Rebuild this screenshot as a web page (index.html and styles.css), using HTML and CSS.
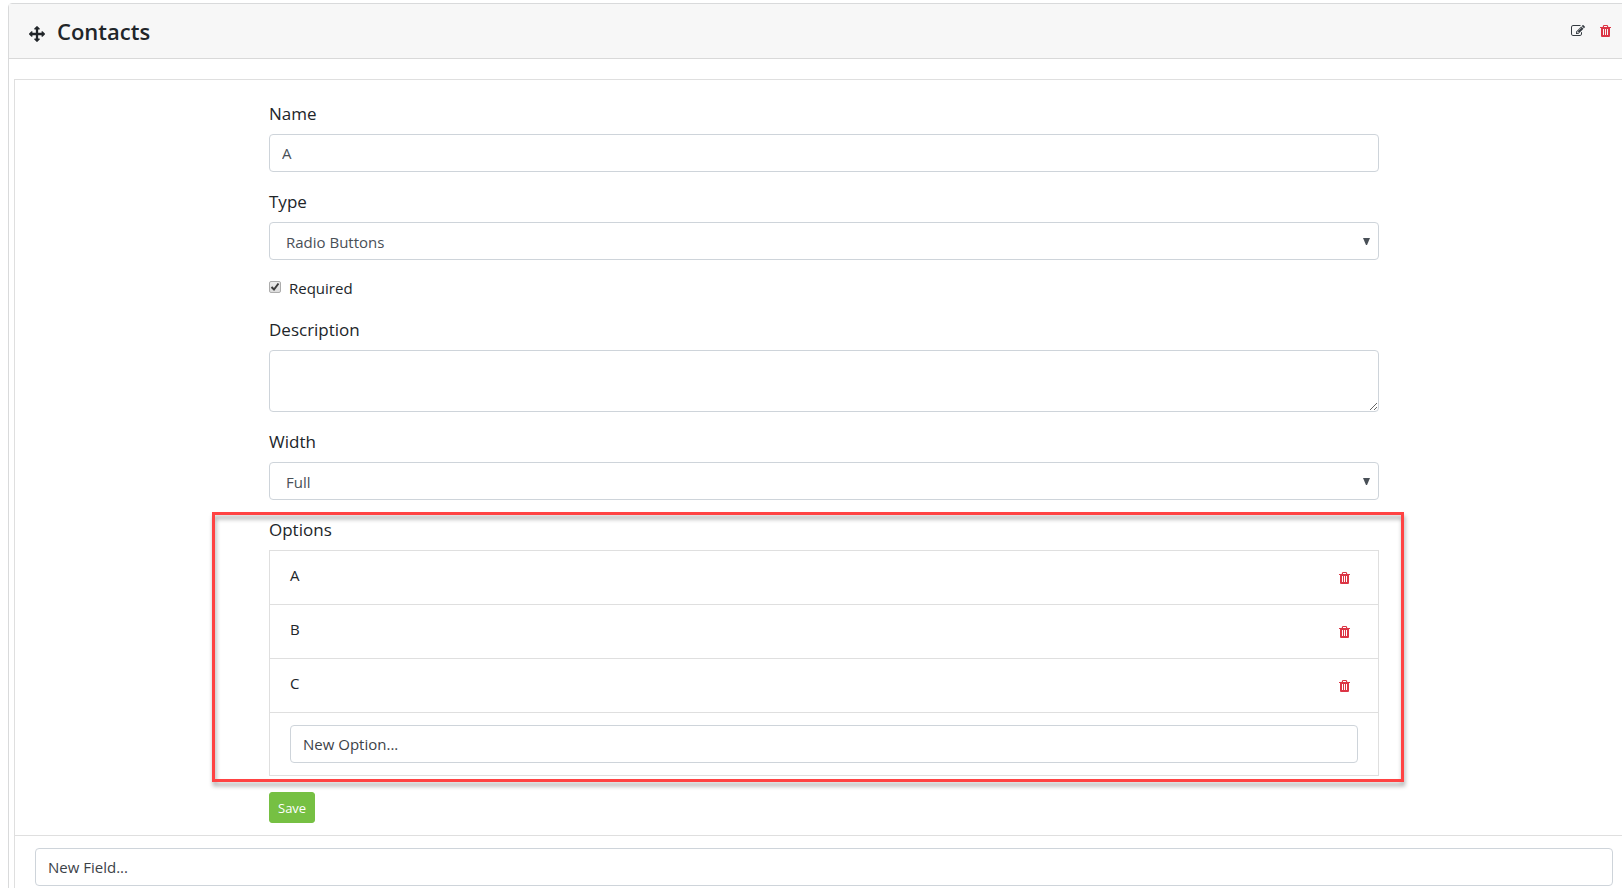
FILE: index.html
```html
<!DOCTYPE html>
<html lang="en">
<head>
<meta charset="utf-8">
<title>Contacts</title>
<link rel="stylesheet" href="styles.css">
</head>
<body>
<svg class="sprite" aria-hidden="true">
  <symbol id="trash" viewBox="0 0 11 12"><path fill-rule="evenodd" d="M4 0h3q.8 0 1 .8l.3 1.200H11v1h-1v8q0 1-1 1H2q-1 0-1-1V3H0V2h2.700L3 .8Q3.200 0 4 0zM4 1v1h3V1zM3 4v6h1V4zM5 4v6h1V4zM7 4v6h1V4z"/></symbol>
  <symbol id="edit" viewBox="0 0 1792 1792"><path d="M888 1184l116-116-152-152-116 116v56h96v96h56zm440-720q-16-16-33 1l-350 350q-17 17-1 33t33-1l350-350q17-17 1-33zm80 594v190q0 119-84.500 203.500t-203.500 84.500h-832q-119 0-203.500-84.500t-84.500-203.500v-832q0-119 84.500-203.500t203.500-84.500h832q63 0 117 25 15 7 18 23 3 17-9 29l-49 49q-14 14-32 8-23-6-45-6h-832q-66 0-113 47t-47 113v832q0 66 47 113t113 47h832q66 0 113-47t47-113v-126q0-13 9-22l64-64q15-15 35-7t20 29zm-96-738l288 288-672 672h-288v-288zm444 132l-92 92-288-288 92-92q28-28 68-28t68 28l152 152q28 28 28 68t-28 68z"/></symbol>
  <symbol id="move" viewBox="0 0 1792 1792"><path d="M1792 896q0 26-19 45l-256 256q-19 19-45 19t-45-19-19-45v-128h-384v384h128q26 0 45 19t19 45-19 45l-256 256q-19 19-45 19t-45-19l-256-256q-19-19-19-45t19-45 45-19h128v-384h-384v128q0 26-19 45t-45 19-45-19l-256-256q-19-19-19-45t19-45l256-256q19-19 45-19t45 19 19 45v128h384v-384h-128q-26 0-45-19t-19-45 19-45l256-256q19-19 45-19t45 19l256 256q19 19 19 45t-19 45-45 19h-128v384h384v-128q0-26 19-45t45-19 45 19l256 256q19 19 19 45z"/></symbol>
  <symbol id="caret" viewBox="0 0 7 7"><path d="M0 0h7L4 7H3z"/></symbol>
</svg>
<main class="card">
  <header class="card-header">
    <svg class="icon-move" aria-hidden="true"><use href="#move"/></svg>
    <h1 class="title">Contacts</h1>
    <div class="actions">
      <button class="icon-btn" type="button" aria-label="Edit"><svg class="icon-edit"><use href="#edit"/></svg></button>
      <button class="icon-btn danger" type="button" aria-label="Delete"><svg class="icon-trash"><use href="#trash"/></svg></button>
    </div>
  </header>
  <div class="fields">
    <div class="field-item">
      <form class="form">
        <div class="group">
          <label class="label" for="name">Name</label>
          <input class="control" id="name" type="text" value="A">
        </div>
        <div class="group">
          <label class="label" for="type">Type</label>
          <div class="select-wrap">
            <select class="control select" id="type"><option>Radio Buttons</option></select>
            <svg class="caret" aria-hidden="true"><use href="#caret"/></svg>
          </div>
        </div>
        <div class="group check">
          <span class="check-box">
            <input class="check-input" id="required" type="checkbox" checked>
            <svg class="check-mark" viewBox="0 0 12 12" aria-hidden="true"><path d="M2.500 6L5 8.500L9.500 2.500"/></svg>
          </span>
          <label for="required">Required</label>
        </div>
        <div class="group">
          <label class="label" for="description">Description</label>
          <textarea class="control textarea" id="description" rows="2"></textarea>
        </div>
        <div class="group">
          <label class="label" for="width">Width</label>
          <div class="select-wrap">
            <select class="control select" id="width"><option>Full</option></select>
            <svg class="caret" aria-hidden="true"><use href="#caret"/></svg>
          </div>
        </div>
        <div class="group options">
          <label class="label" for="new-option">Options</label>
          <ul class="option-list">
            <li class="option"><span>A</span><button class="icon-btn danger" type="button" aria-label="Delete A"><svg class="icon-trash"><use href="#trash"/></svg></button></li>
            <li class="option"><span>B</span><button class="icon-btn danger" type="button" aria-label="Delete B"><svg class="icon-trash"><use href="#trash"/></svg></button></li>
            <li class="option"><span>C</span><button class="icon-btn danger" type="button" aria-label="Delete C"><svg class="icon-trash"><use href="#trash"/></svg></button></li>
            <li class="option"><input class="control" id="new-option" type="text" placeholder="New Option..."></li>
          </ul>
          <div class="highlight"></div>
        </div>
        <button class="save" type="button">Save</button>
      </form>
    </div>
    <div class="field-item new-field">
      <input class="control" type="text" placeholder="New Field..." aria-label="New Field">
    </div>
  </div>
</main>
</body>
</html>
```
FILE: styles.css
```css
* { box-sizing: border-box; }

body {
  margin: 0;
  overflow: hidden;
  background: #fff;
  color: #212529;
  font: 15px/24px "Segoe UI", "Open Sans", "Noto Sans", sans-serif;
}

.sprite { display: none; }
svg { display: block; fill: currentColor; }

/* The card runs past the right edge of the window. */
.card {
  margin: 3px -18px 0 8px;
  padding-bottom: 20px;
  border: 1px solid #d9dadb;
  border-radius: 4px;
}

.card-header {
  display: flex;
  align-items: center;
  padding: 12px 20px;
  background: #f7f7f7;
  border-bottom: 1px solid #d9d9d9;
}

.icon-move { width: 16px; height: 16px; margin-top: 6px; }

.title {
  margin: 0 0 0 12px;
  font-size: 22px;
  line-height: 30px;
  font-weight: 600;
}

.actions { display: flex; align-items: center; margin-left: auto; }

.icon-btn {
  display: flex;
  align-items: center;
  padding: 8px;
  border: 0;
  background: none;
  color: #343a40;
}

.danger { color: #dc3545; }
.actions .danger { padding-left: 7px; }
.icon-edit { width: 14px; height: 14px; }
.icon-trash { width: 11px; height: 12px; }

.fields {
  margin: 20px 5px 0;
  border: 1px solid #dfdfdf;
}

.field-item { padding: 20px 20px 12px; }

.new-field {
  padding-top: 12px;
  border-top: 1px solid #dfdfdf;
}

.form { max-width: 1110px; margin: 0 auto; }
.group { margin-bottom: 16px; }

.label {
  display: block;
  padding-top: 2px;
  margin-bottom: 8px;
  font-size: 17px;
  line-height: 24px;
}

.control {
  display: block;
  width: 100%;
  height: 38px;
  padding: 6px 12px;
  border: 1px solid #ced4da;
  border-radius: 4px;
  background: #fff;
  color: #495057;
  font: inherit;
}

.control::placeholder { color: #3c4248; opacity: 1; }

.select-wrap { position: relative; }
.select { padding: 7px 16px 5px; appearance: none; }

.caret {
  position: absolute;
  top: 16px;
  right: 9px;
  width: 7px;
  height: 7px;
  color: #495057;
  pointer-events: none;
}

.textarea { height: 62px; resize: vertical; }

.check { display: flex; align-items: flex-start; gap: 8px; }
.check-box { position: relative; width: 12px; height: 12px; margin-top: 5px; }

.check-input {
  display: block;
  width: 12px;
  height: 12px;
  margin: 0;
  appearance: none;
  border: 1px solid #acacac;
  border-radius: 2px;
  background: linear-gradient(#ececec, #dcdcdc);
}

.check-mark {
  position: absolute;
  inset: 0;
  fill: none;
  stroke: #3c3c3c;
  stroke-width: 2;
  pointer-events: none;
}

.options { position: relative; }

.option-list {
  margin: 0;
  padding: 0;
  list-style: none;
  border: 1px solid #dfdfdf;
}

.option {
  display: flex;
  justify-content: space-between;
  padding: 12px 20px;
}

.option + .option { border-top: 1px solid #dfdfdf; }
.option .icon-btn { padding: 9px 8px 8px; }

.highlight {
  position: absolute;
  inset: -4px -25px -6px -57px;
  border: 3px solid #ff4343;
  filter: drop-shadow(1px 4px 2px rgba(0, 0, 0, 0.35));
  pointer-events: none;
}

.save {
  display: block;
  padding: 5px 8px 3px;
  border: 1px solid #76c043;
  border-radius: 3px;
  background: #76c043;
  color: #fff;
  font: 13px/21px "Segoe UI", "Open Sans", "Noto Sans", sans-serif;
}
```
